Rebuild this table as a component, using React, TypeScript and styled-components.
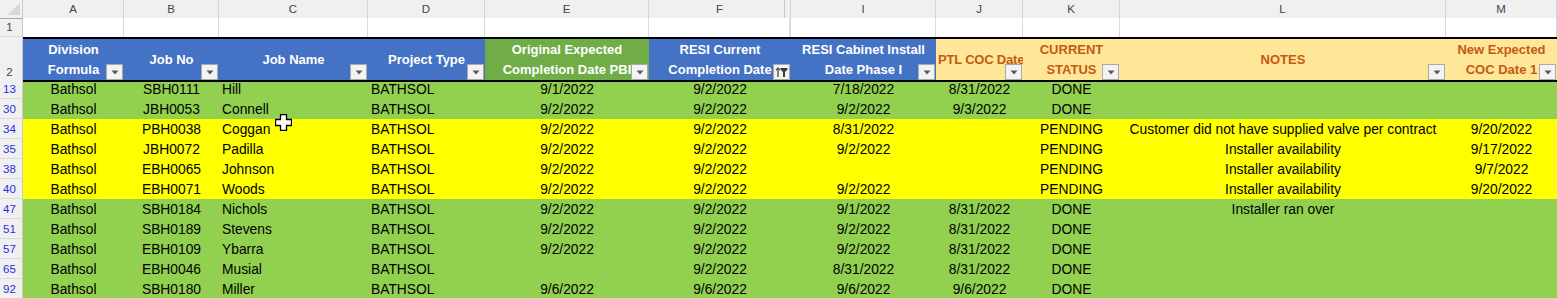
import React from "react";
import styled, { createGlobalStyle } from "styled-components";

const GlobalStyle = createGlobalStyle`
  html, body { margin: 0; padding: 0; background: #ffffff; }
  * { box-sizing: border-box; }
`;

const COLS = "23px 101px 95px 149px 117px 164px 142px 145px 87px 97px 326px 111px";

const Sheet = styled.div`
  position: relative;
  width: 1557px;
  height: 298px;
  overflow: hidden;
  font-family: "Liberation Sans", Arial, sans-serif;
  background: #ffffff;
`;

const Row = styled.div<{ $h: number; $bg?: string }>`
  display: grid;
  grid-template-columns: ${COLS};
  height: ${(p) => p.$h}px;
  background: ${(p) => p.$bg ?? "transparent"};
`;

const Corner = styled.div`
  position: relative;
  background: #f0f0f0;
  border-right: 1px solid #c9c9c9;
  border-bottom: 1px solid #a8a8a8;
  &::after {
    content: "";
    position: absolute;
    right: 2px;
    bottom: 3px;
    width: 13px;
    height: 12px;
    background: #d7d7d7;
    clip-path: polygon(100% 0, 100% 100%, 0 100%);
  }
`;

const ColLetter = styled.div<{ $split?: boolean }>`
  position: relative;
  background: #f0f0f0;
  color: #444444;
  font-size: 11.5px;
  line-height: 18px;
  text-align: center;
  border-right: 1px solid #d5d5d5;
  border-bottom: 1px solid #a8a8a8;
  &::after {
    content: "";
    display: ${(p) => (p.$split ? "block" : "none")};
    position: absolute;
    top: 0;
    bottom: 0;
    right: 5px;
    width: 1px;
    background: #c8c8c8;
  }
`;

const RowNum = styled.div<{ $filtered?: boolean }>`
  background: #f0f0f0;
  color: ${(p) => (p.$filtered ? "#2b2be6" : "#444444")};
  font-size: 11.5px;
  line-height: 14px;
  display: flex;
  align-items: flex-end;
  justify-content: center;
  padding: 0 3px 2px 0;
  border-right: 1px solid #c9c9c9;
  border-bottom: 1px solid #dadada;
`;

const BlankCell = styled.div<{ $split?: boolean }>`
  position: relative;
  background: #ffffff;
  border-right: 1px solid #dadada;
  &::after {
    content: "";
    display: ${(p) => (p.$split ? "block" : "none")};
    position: absolute;
    top: 0;
    bottom: 0;
    right: 0;
    width: 1px;
    background: #dadada;
  }
`;

const HeadCell = styled.div<{ $bg: string; $fg: string; $left?: boolean }>`
  position: relative;
  background: ${(p) => p.$bg};
  color: ${(p) => p.$fg};
  font-weight: bold;
  font-size: 13px;
  line-height: 20px;
  letter-spacing: ${(p) => (p.$left ? "-0.2px" : "0")};
  border-top: 2px solid #000000;
  border-bottom: 2px solid #000000;
  padding: ${(p) => (p.$left ? "1px 0 0 2px" : "1px 0 0 0")};
  display: flex;
  flex-direction: column;
  justify-content: center;
  align-items: ${(p) => (p.$left ? "flex-start" : "center")};
`;

const HeadLine = styled.span`
  display: block;
  white-space: nowrap;
`;

const FilterBtn = styled.span`
  position: absolute;
  right: 1px;
  bottom: 0;
  width: 17px;
  height: 16px;
  background: #f3f3f3;
  border: 1px solid #a9a9a9;
  display: flex;
  align-items: center;
  justify-content: center;
`;

const DataCell = styled.div<{ $left?: boolean }>`
  color: #000000;
  font-size: 13.8px;
  line-height: 20px;
  padding: 1px 3px 0;
  white-space: nowrap;
  overflow: hidden;
  text-align: ${(p) => (p.$left ? "left" : "center")};
`;

const Cursor = styled.svg`
  position: absolute;
  left: 275px;
  top: 114px;
`;

const BLUE = "#4472c4";
const GREEN_H = "#70ad47";
const YEL_H = "#ffe699";
const BROWN = "#c55a11";
const GREEN = "#92d050";
const YELLOW = "#ffff00";

type Head = { lines: string[]; bg: string; fg: string; icon?: "sort"; left?: boolean };

const heads: Head[] = [
  { lines: ["Division", "Formula"], bg: BLUE, fg: "#fff" },
  { lines: ["Job No"], bg: BLUE, fg: "#fff" },
  { lines: ["Job Name"], bg: BLUE, fg: "#fff" },
  { lines: ["Project Type"], bg: BLUE, fg: "#fff" },
  { lines: ["Original Expected", "Completion Date PBI"], bg: GREEN_H, fg: "#fff" },
  { lines: ["RESI Current", "Completion Date"], bg: BLUE, fg: "#fff", icon: "sort" },
  { lines: ["RESI Cabinet Install", "Date Phase I"], bg: BLUE, fg: "#fff" },
  { lines: ["PTL COC Date"], bg: YEL_H, fg: BROWN, left: true },
  { lines: ["CURRENT", "STATUS"], bg: YEL_H, fg: BROWN },
  { lines: ["NOTES"], bg: YEL_H, fg: BROWN },
  { lines: ["New Expected", "COC Date 1"], bg: YEL_H, fg: BROWN },
];

const letters = ["A", "B", "C", "D", "E", "F", "I", "J", "K", "L", "M"];

type Rec = { n: number; c: string[]; bg: string };

const rows: Rec[] = [
  { n: 13, bg: GREEN, c: ["Bathsol", "SBH0111", "Hill", "BATHSOL", "9/1/2022", "9/2/2022", "7/18/2022", "8/31/2022", "DONE", "", ""] },
  { n: 30, bg: GREEN, c: ["Bathsol", "JBH0053", "Connell", "BATHSOL", "9/2/2022", "9/2/2022", "9/2/2022", "9/3/2022", "DONE", "", ""] },
  { n: 34, bg: YELLOW, c: ["Bathsol", "PBH0038", "Coggan", "BATHSOL", "9/2/2022", "9/2/2022", "8/31/2022", "", "PENDING", "Customer did not have supplied valve per contract", "9/20/2022"] },
  { n: 35, bg: YELLOW, c: ["Bathsol", "JBH0072", "Padilla", "BATHSOL", "9/2/2022", "9/2/2022", "9/2/2022", "", "PENDING", "Installer availability", "9/17/2022"] },
  { n: 38, bg: YELLOW, c: ["Bathsol", "EBH0065", "Johnson", "BATHSOL", "9/2/2022", "9/2/2022", "", "", "PENDING", "Installer availability", "9/7/2022"] },
  { n: 40, bg: YELLOW, c: ["Bathsol", "EBH0071", "Woods", "BATHSOL", "9/2/2022", "9/2/2022", "9/2/2022", "", "PENDING", "Installer availability", "9/20/2022"] },
  { n: 47, bg: GREEN, c: ["Bathsol", "SBH0184", "Nichols", "BATHSOL", "9/2/2022", "9/2/2022", "9/1/2022", "8/31/2022", "DONE", "Installer ran over", ""] },
  { n: 51, bg: GREEN, c: ["Bathsol", "SBH0189", "Stevens", "BATHSOL", "9/2/2022", "9/2/2022", "9/2/2022", "8/31/2022", "DONE", "", ""] },
  { n: 57, bg: GREEN, c: ["Bathsol", "EBH0109", "Ybarra", "BATHSOL", "9/2/2022", "9/2/2022", "9/2/2022", "8/31/2022", "DONE", "", ""] },
  { n: 65, bg: GREEN, c: ["Bathsol", "EBH0046", "Musial", "BATHSOL", "", "9/2/2022", "8/31/2022", "8/31/2022", "DONE", "", ""] },
  { n: 92, bg: GREEN, c: ["Bathsol", "SBH0180", "Miller", "BATHSOL", "9/6/2022", "9/6/2022", "9/6/2022", "9/6/2022", "DONE", "", ""] },
];

const DropIcon = () => (
  <svg width="8" height="5" viewBox="0 0 8 5">
    <path d="M0.5 0.5h7L4 4.5z" fill="#5a5a5a" />
  </svg>
);

const SortFilterIcon = () => (
  <svg width="13" height="11" viewBox="0 0 13 11">
    <path d="M3 1v9" stroke="#3a3a3a" strokeWidth="1.2" />
    <path d="M1 3.2L3 1l2 2.2" stroke="#3a3a3a" strokeWidth="1.1" fill="none" />
    <path d="M5.5 1h7v1.5L10 5v5H8V5L5.5 2.5z" fill="#3a3a3a" />
  </svg>
);

export default function App() {
  return (
    <>
      <GlobalStyle />
      <Sheet>
        <Row $h={18}>
          <Corner />
          {letters.map((l) => (
            <ColLetter key={l} $split={l === "F"}>
              {l}
            </ColLetter>
          ))}
        </Row>
        <Row $h={19}>
          <RowNum>1</RowNum>
          {letters.map((l) => (
            <BlankCell key={l} $split={l === "F"} />
          ))}
        </Row>
        <Row $h={42}>
          <RowNum>2</RowNum>
          {heads.map((h, i) => (
            <HeadCell key={i} $bg={h.bg} $fg={h.fg} $left={h.left}>
              {h.lines.map((t) => (
                <HeadLine key={t}>{t}</HeadLine>
              ))}
              <FilterBtn>{h.icon === "sort" ? <SortFilterIcon /> : <DropIcon />}</FilterBtn>
            </HeadCell>
          ))}
        </Row>
        {rows.map((r) => (
          <Row key={r.n} $h={20} $bg={r.bg}>
            <RowNum $filtered>{r.n}</RowNum>
            {r.c.map((v, i) => (
              <DataCell key={i} $left={i === 2 || i === 3}>
                {v}
              </DataCell>
            ))}
          </Row>
        ))}
        <Cursor width="17" height="17" viewBox="0 0 17 17">
          <path
            d="M5.5 0.5h6v5h5v6h-5v5h-6v-5h-5v-6h5z"
            fill="#ffffff"
            stroke="#000000"
            strokeWidth="1.3"
            strokeLinejoin="round"
          />
        </Cursor>
      </Sheet>
    </>
  );
}
